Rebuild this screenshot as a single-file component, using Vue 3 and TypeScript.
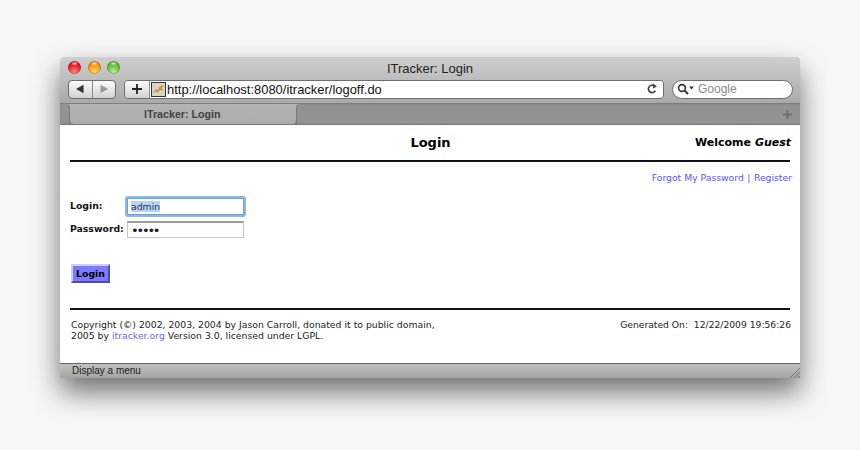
<script setup lang="ts">
import { onMounted, ref } from 'vue'

const title: string = 'ITracker: Login'
const loginInput = ref<HTMLInputElement | null>(null)

onMounted(() => {
  loginInput.value?.focus()
  loginInput.value?.select()
})
</script>

<template>
  <div class="page">
    <div class="window">
      <header class="chrome">
        <div class="titlebar">
          <div class="lights">
            <span class="light red"></span>
            <span class="light amber"></span>
            <span class="light green"></span>
          </div>
          <span class="title">{{ title }}</span>
        </div>
        <div class="toolbar">
          <div class="btn-group">
            <button class="tb-btn" type="button">
              <svg width="10" height="10" viewBox="0 0 10 10"><path d="M1 5 8.5 .8V9.2Z" fill="#333" /></svg>
            </button>
            <button class="tb-btn second" type="button">
              <svg width="10" height="10" viewBox="0 0 10 10"><path d="M9 5 1.5 .8V9.2Z" fill="#999" /></svg>
            </button>
          </div>
          <div class="address">
            <button class="plus" type="button">
              <svg width="12" height="12" viewBox="0 0 12 12"><path d="M6 1V11M1 6H11" stroke="#222" stroke-width="1.8" /></svg>
            </button>
            <div class="url-field">
              <svg class="favicon" width="15" height="15" viewBox="0 0 15 15">
                <rect x=".5" y=".5" width="14" height="14" fill="#d9d4c8" stroke="#333" />
                <path d="M2 11 5 7 7 8 9 4 13 3 11 6 12 9 9 8 7 11 5 10Z" fill="#c99a3c" />
              </svg>
              <span class="url">http://localhost:8080/itracker/logoff.do</span>
              <svg class="reload" width="12" height="12" viewBox="0 0 12 12">
                <path d="M9.4 7.6A3.7 3.7 0 1 1 8.6 3.2" fill="none" stroke="#444" stroke-width="1.7" />
                <path d="M7 .6 11 3.4 7 5.4Z" fill="#444" />
              </svg>
            </div>
          </div>
          <div class="search">
            <svg width="18" height="12" viewBox="0 0 18 12">
              <circle cx="5" cy="5" r="3.4" fill="none" stroke="#333" stroke-width="1.6" />
              <path d="M7.6 7.6 11 11" stroke="#333" stroke-width="1.9" />
              <path d="M12 3.5H17L14.5 6.5Z" fill="#333" />
            </svg>
            <span class="search-text">Google</span>
          </div>
        </div>
      </header>

      <div class="tabbar">
        <div class="tab-left"></div>
        <div class="tab">{{ title }}</div>
        <div class="tab-rest">
          <svg width="9" height="9" viewBox="0 0 9 9"><path d="M4.5 0V9M0 4.5H9" stroke="#6e6e6e" stroke-width="2" /></svg>
        </div>
      </div>

      <main class="content">
        <div class="head">
          <span class="spacer"></span>
          <h1 class="heading">Login</h1>
          <div class="welcome">Welcome <em>Guest</em></div>
        </div>
        <hr class="rule" />
        <div class="links">
          <a>Forgot My Password</a>
          <span class="pipe">|</span>
          <a>Register</a>
        </div>

        <form class="form" @submit.prevent>
          <label class="label" for="login">Login:</label>
          <input id="login" ref="loginInput" class="input focus" value="admin" />
          <label class="label" for="password">Password:</label>
          <input id="password" class="input pwinput" type="password" value="admin" />
          <button class="submit" type="submit">Login</button>
        </form>

        <hr class="rule low" />
        <div class="foot">
          <p class="copy">
            Copyright (©) 2002, 2003, 2004 by Jason Carroll, donated it to public domain,<br />
            2005 by <a>itracker.org</a> Version 3.0, licensed under LGPL.
          </p>
          <p class="generated">Generated On:&nbsp; 12/22/2009 19:56:26</p>
        </div>
      </main>

      <footer class="status">
        <span>Display a menu</span>
        <svg class="grip" width="11" height="11" viewBox="0 0 11 11">
          <path d="M1 11 11 1M5 11 11 5M9 11 11 9" stroke="#777" stroke-width="1" fill="none" />
        </svg>
      </footer>
    </div>
  </div>
</template>

<style>
html, body { margin: 0; background: #f7f7f7; }
</style>

<style scoped>
.page {
  width: 860px;
  height: 450px;
  overflow: hidden;
  padding: 57px 0 0 60px;
  box-sizing: border-box;
  background: #f7f7f7;
  font-family: "DejaVu Sans", Verdana, sans-serif;
}
.window {
  width: 740px;
  height: 321px;
  display: flex;
  flex-direction: column;
  border-radius: 4px 4px 0 0;
  box-shadow: 0 14px 28px 0 rgba(0, 0, 0, .55);
}
.chrome {
  height: 47px;
  flex: none;
  display: flex;
  flex-direction: column;
  border-radius: 4px 4px 0 0;
  background: linear-gradient(#cfcfcf, #a9a9a9);
  border-bottom: 1px solid #7d7d7d;
  box-sizing: border-box;
}
.titlebar {
  height: 22px;
  flex: none;
  position: relative;
  display: flex;
  align-items: center;
  justify-content: center;
}
.lights {
  position: absolute;
  left: 8px;
  top: 4px;
  display: flex;
  gap: 6.5px;
}
.light {
  width: 13px;
  height: 13px;
  border-radius: 50%;
  box-shadow: inset 0 0 0 1px rgba(0, 0, 0, .22);
}
.red {
  background:
    radial-gradient(ellipse 4px 2.5px at 50% 18%, rgba(255, 255, 255, .75), transparent),
    radial-gradient(circle at 50% 85%, #ff8a80, #e8141f 60%, #b00c14);
}
.amber {
  background:
    radial-gradient(ellipse 4px 2.5px at 50% 18%, rgba(255, 255, 255, .75), transparent),
    radial-gradient(circle at 50% 85%, #ffd860, #f59414 60%, #c06a08);
}
.green {
  background:
    radial-gradient(ellipse 4px 2.5px at 50% 18%, rgba(255, 255, 255, .75), transparent),
    radial-gradient(circle at 50% 85%, #b8f090, #5cbc34 60%, #3c8c24);
}
.title {
  font-family: "Liberation Sans", Arial, sans-serif;
  font-size: 13px;
  color: #222;
}
.toolbar {
  display: flex;
  align-items: center;
  height: 20px;
  padding-left: 8px;
}
.btn-group {
  display: flex;
  flex: none;
  width: 48px;
  height: 19px;
  box-sizing: border-box;
  border: 1px solid #6e6e6e;
  border-radius: 4px;
  overflow: hidden;
  background: linear-gradient(#fbfbfb, #d2d2d2);
}
.tb-btn {
  flex: 1;
  border: 0;
  padding: 0;
  background: none;
  display: flex;
  align-items: center;
  justify-content: center;
}
.second { border-left: 1px solid #8a8a8a; }
.address {
  display: flex;
  flex: none;
  width: 540px;
  height: 19px;
  margin-left: 8px;
  box-sizing: border-box;
  border: 1px solid #6e6e6e;
  border-radius: 4px;
  overflow: hidden;
}
.plus {
  width: 25px;
  flex: none;
  border: 0;
  border-right: 1px solid #8a8a8a;
  padding: 0;
  background: linear-gradient(#fbfbfb, #d2d2d2);
  display: flex;
  align-items: center;
  justify-content: center;
}
.url-field {
  flex: 1;
  background: #fff;
  display: flex;
  align-items: center;
  padding: 0 5px 0 1px;
  min-width: 0;
}
.favicon { flex: none; }
.url {
  flex: 1;
  margin-left: 1px;
  font-family: "Liberation Sans", Arial, sans-serif;
  font-size: 12.95px;
  color: #111;
  white-space: nowrap;
}
.reload { flex: none; }
.search {
  flex: none;
  width: 121px;
  height: 19px;
  margin-left: 8px;
  box-sizing: border-box;
  border: 1px solid #6e6e6e;
  border-radius: 10px;
  background: #fff;
  display: flex;
  align-items: center;
  gap: 3px;
  padding-left: 4px;
}
.search-text {
  font-family: "Liberation Sans", Arial, sans-serif;
  font-size: 12px;
  color: #8a8a8a;
}
.tabbar {
  height: 21px;
  flex: none;
  display: flex;
  background: linear-gradient(#aeaeae 0 8px, #868686 8px);
  border-bottom: 1px solid #777;
  box-sizing: border-box;
}
.tab-left {
  width: 10px;
  flex: none;
  background: #929292;
  border-right: 1px solid #7a7a7a;
  border-top-right-radius: 4px;
  box-sizing: border-box;
}
.tab {
  width: 226px;
  flex: none;
  box-sizing: border-box;
  padding-left: 74px;
  font-family: "Liberation Sans", Arial, sans-serif;
  font-size: 10.7px;
  font-weight: 700;
  line-height: 20px;
  color: #444;
  background: linear-gradient(#b4b4b4, #acacac);
  border-radius: 0 0 4px 4px;
}
.tab-rest {
  flex: 1;
  display: flex;
  align-items: center;
  justify-content: flex-end;
  padding-right: 8px;
  background: #929292;
  border-left: 1px solid #7a7a7a;
  border-top: 1px solid #8a8a8a;
  border-top-left-radius: 4px;
}
.content {
  flex: 1;
  background: #fff;
  padding: 0 10px;
  display: flex;
  flex-direction: column;
  color: #111;
  font-size: 9.3px;
  min-height: 0;
}
.head {
  height: 35px;
  flex: none;
  display: flex;
  align-items: center;
}
.spacer { flex: 1; }
.heading {
  margin: 0;
  font-size: 13px;
  font-weight: 700;
  color: #000;
}
.welcome {
  flex: 1;
  margin-right: -1px;
  text-align: right;
  font-size: 11px;
  font-weight: 700;
  color: #000;
}
.rule {
  flex: none;
  margin: 0;
  height: 2px;
  border: 0;
  background: #111;
}
.links {
  flex: none;
  margin: 9px -2px 0 0;
  height: 13px;
  line-height: 13px;
  text-align: right;
  font-size: 9.25px;
  color: #5555ff;
}
.pipe { margin: 0 3.5px; }
.form {
  flex: none;
  display: grid;
  grid-template-columns: 57px 117px;
  grid-template-rows: 19px 19px;
  row-gap: 4px;
  justify-content: start;
  align-items: center;
  margin-top: 13px;
}
.label {
  font-size: 9.3px;
  font-weight: 700;
  color: #111;
  white-space: nowrap;
  margin-bottom: 3px;
}
.input {
  width: 117px;
  height: 17px;
  box-sizing: border-box;
  padding: 0 3px;
  margin: 0;
  font-family: "DejaVu Sans", Verdana, sans-serif;
  font-size: 9.3px;
  color: #333;
  outline: 0;
  border: 1px solid #c4c4c4;
  border-top: 2px solid #9c9c9c;
  background: #fff;
}
.input::selection {
  background: #b5d5ff;
  color: #333;
}
.pwinput {
  font-size: 13px;
  letter-spacing: -2.2px;
  color: #222;
}
.focus {
  border: 1px solid #6f9fd0;
  box-shadow: 0 0 0 2px #8db8e6;
  border-radius: 1px;
}
.submit {
  grid-column: 1;
  grid-row: 3;
  margin: 21px 0 0 1px;
  width: 39px;
  height: 19px;
  padding: 0;
  box-sizing: border-box;
  background: #7b7bff;
  border: 2px solid;
  border-color: #ccccff #4a4ab0 #4a4ab0 #ccccff;
  font-family: "DejaVu Sans", Verdana, sans-serif;
  font-size: 9.3px;
  font-weight: 700;
  color: #000;
}
.low { margin-top: 25px; }
.foot {
  flex: none;
  margin: 9px -1px 0 0;
  display: flex;
  justify-content: space-between;
  font-size: 9.3px;
  line-height: 11px;
  color: #222;
}
.copy, .generated { margin: 0; white-space: nowrap; }
.copy { padding-left: 1px; }
.copy a { color: #6666ff; }
.generated { font-size: 9.2px; }
.status {
  height: 15px;
  flex: none;
  box-sizing: border-box;
  border-top: 1px solid #666;
  background: linear-gradient(#c2c2c2, #a4a4a4);
  padding-left: 12px;
  font-family: "Liberation Sans", Arial, sans-serif;
  font-size: 10px;
  line-height: 14px;
  color: #222;
  position: relative;
}
.grip { position: absolute; right: 0; bottom: 0; }
</style>
